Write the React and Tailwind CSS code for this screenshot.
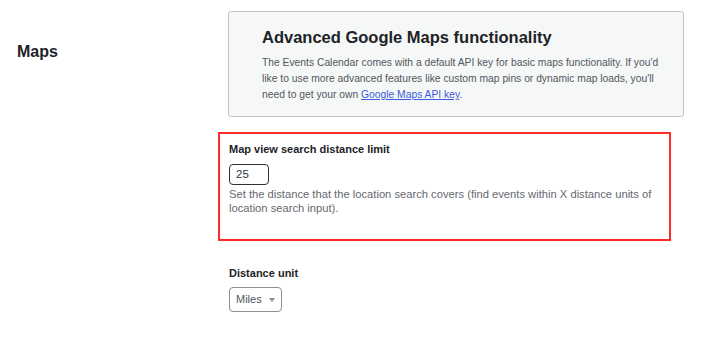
export default function App() {
  return (
    <div className="w-[705px] h-[361px] bg-white flex overflow-hidden" style={{ fontFamily: '"Liberation Sans", Arial, sans-serif' }}>
      <div className="w-[218px] shrink-0 pl-[17px] pt-[42px]">
        <div className="text-[16px] leading-[20px] font-bold text-[#1d2327]">Maps</div>
      </div>
      <div className="flex flex-col">
        <div className="ml-[10px] mt-[11px] w-[456px] h-[106px] bg-[#f6f7f7] border border-[#c3c4c7] rounded-[3px] pl-[33px] pt-[15px]">
          <div className="text-[16.5px] leading-[20px] font-bold text-[#1d2327]">Advanced Google Maps functionality</div>
          <p className="mt-[8px] text-[10.3px] leading-[16px] text-[#50575e] w-[406px]">
            The Events Calendar comes with a default API key for basic maps functionality. If you'd like to use more advanced features like custom map pins or dynamic map loads, you'll need to get your own{' '}
            <a className="text-[#3b5bdb] underline">Google Maps API key</a>.
          </p>
        </div>
        <div className="mt-[15px] w-[453px] h-[109px] border-2 border-[#ff2b2b] pl-[9px] pt-[8px]">
          <div className="text-[11px] leading-[14px] font-bold text-[#1d2327]">Map view search distance limit</div>
          <div className="mt-[8px] w-[40px] h-[21px] border border-[#2c3338] rounded-[4px] pl-[6px] text-[11.5px] leading-[19px] text-[#2c3338]">25</div>
          <p className="mt-[2px] text-[11.2px] leading-[14px] text-[#646970] w-[435px]">
            Set the distance that the location search covers (find events within X distance units of location search input).
          </p>
        </div>
        <div className="ml-[11px] mt-[25px] text-[11px] leading-[14px] font-bold text-[#1d2327]">Distance unit</div>
        <div className="ml-[11px] mt-[7px] w-[53px] h-[25px] border border-[#8c8f94] rounded-[4px] flex items-center pl-[6px] pr-[6px] justify-between">
          <span className="text-[11px] text-[#50575e]">Miles</span>
          <span className="w-0 h-0 border-l-[3px] border-r-[3px] border-t-[4px] border-l-transparent border-r-transparent border-t-[#8c8f94]"></span>
        </div>
      </div>
    </div>
  );
}
